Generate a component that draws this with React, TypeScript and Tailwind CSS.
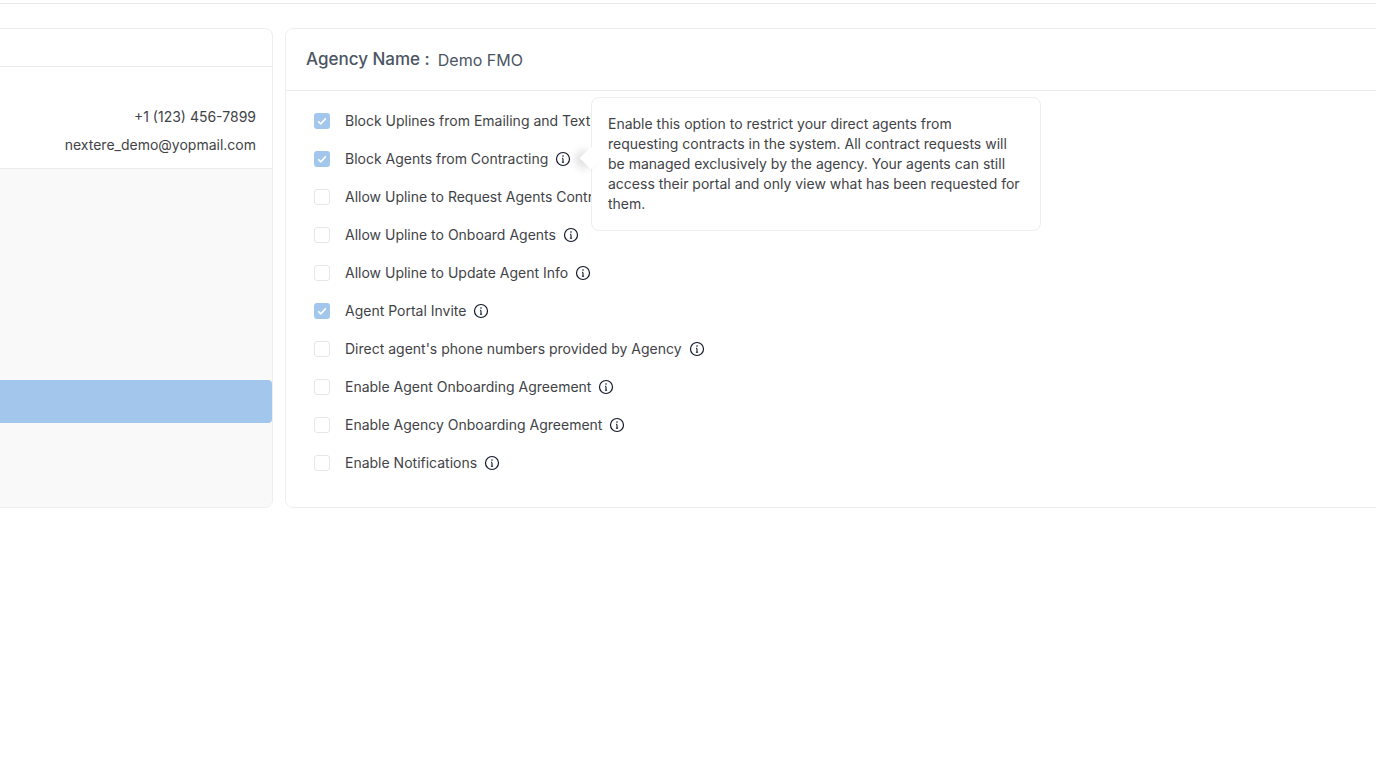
const settings = [
  { label: 'Block Uplines from Emailing and Texting Agents', checked: true },
  { label: 'Block Agents from Contracting', checked: true },
  { label: 'Allow Upline to Request Agents Contracts', checked: false },
  { label: 'Allow Upline to Onboard Agents', checked: false },
  { label: 'Allow Upline to Update Agent Info', checked: false },
  { label: 'Agent Portal Invite', checked: true },
  { label: "Direct agent's phone numbers provided by Agency", checked: false },
  { label: 'Enable Agent Onboarding Agreement', checked: false },
  { label: 'Enable Agency Onboarding Agreement', checked: false },
  { label: 'Enable Notifications', checked: false },
];

const InfoIcon = () => (
  <svg width="16" height="16" viewBox="0 0 16 16" fill="none" className="shrink-0">
    <circle cx="8" cy="8" r="6.5" stroke="#111827" strokeWidth="1.2" />
    <path d="M8 7.4V11.2M6.9 11.2H9.1M7.1 7.4H8" stroke="#111827" strokeWidth="1.1" />
    <circle cx="8" cy="5" r="0.8" fill="#111827" />
  </svg>
);

const Checkbox = ({ checked }: { checked: boolean }) =>
  checked ? (
    <span className="flex h-4 w-4 shrink-0 items-center justify-center rounded-[3px] bg-[#a3c6ec]">
      <svg width="12" height="12" viewBox="0 0 12 12" fill="none">
        <path d="M2.2 6.4L4.8 8.8L9.8 3.4" stroke="#ffffff" strokeWidth="1.6" />
      </svg>
    </span>
  ) : (
    <span className="h-4 w-4 shrink-0 rounded-[3px] border border-[#e5e7eb] bg-white" />
  );

const App = () => {
  return (
    <div className="h-[769px] w-[1376px] overflow-hidden bg-white font-['Inter',sans-serif] text-sm text-[#3f4347]">
      <div className="h-1 border-b border-[#e5e7eb]" />
      <div className="flex gap-3 pt-6">
        <div className="-ml-2 flex h-[480px] w-[281px] flex-col overflow-hidden rounded-lg border border-[#eceef0]">
          <div className="h-[38px] shrink-0 border-b border-[#e9ebed]" />
          <div className="flex h-[102px] shrink-0 flex-col items-end gap-2 border-b border-[#e9ebed] px-4 pt-10">
            <p className="leading-5">+1 (123) 456-7899</p>
            <p className="leading-5">nextere_demo@yopmail.com</p>
          </div>
          <div className="flex-1 bg-[#f9f9f9] pt-[211px]">
            <div className="h-[43px] rounded-r-[4px] bg-[#a3c6ec]" />
          </div>
        </div>

        <div className="relative -mr-4 h-[480px] flex-1 rounded-lg border border-[#eceef0]">
          <div className="flex h-[62px] items-center gap-2 border-b border-[#e9ebed] px-5">
            <h2 className="text-[17px] font-medium text-[#4b5563]">Agency Name :</h2>
            <span className="text-base text-[#4b5563]">Demo FMO</span>
          </div>
          <div className="flex flex-col gap-[18px] px-7 pt-5">
            {settings.map((s) => (
              <div key={s.label} className="flex h-5 items-center">
                <Checkbox checked={s.checked} />
                <span className="ml-[15px] leading-5">{s.label}</span>
                <span className="ml-[7px]">
                  <InfoIcon />
                </span>
              </div>
            ))}
          </div>

          <div className="absolute left-[305px] top-[68px] w-[450px] rounded-lg border border-[#eceef0] bg-white py-4 pl-4 pr-5 leading-5">
            <span className="absolute -left-[9px] top-[52px] h-4 w-4 rotate-45 bg-white shadow-[-4px_6px_8px_rgba(0,0,0,0.12)]" />
            <p className="relative">
              Enable this option to restrict your direct agents from requesting contracts in the system. All contract
              requests will be managed exclusively by the agency. Your agents can still access their portal and only
              view what has been requested for them.
            </p>
          </div>
        </div>
      </div>
    </div>
  );
};

export default App;
